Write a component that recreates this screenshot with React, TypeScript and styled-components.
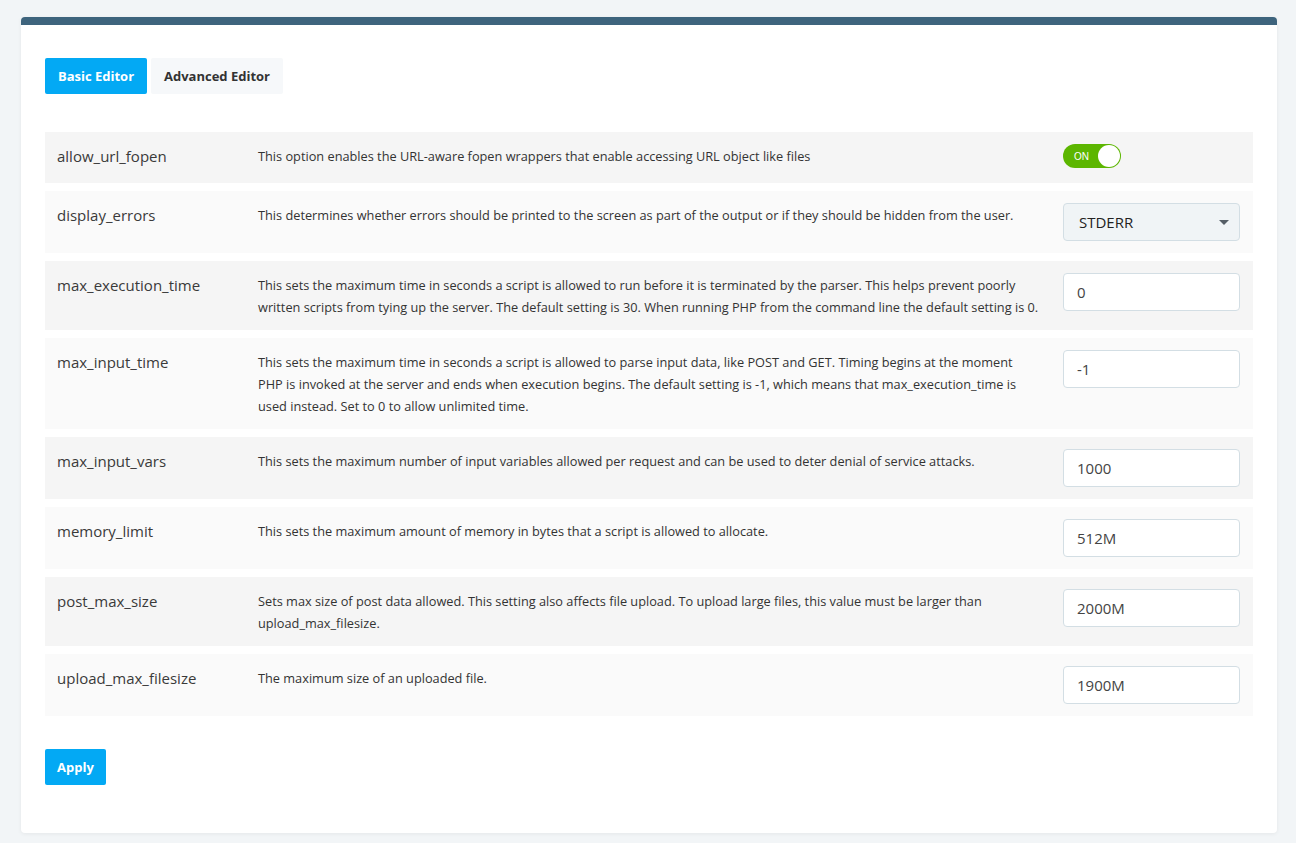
import React from "react";
import styled, { createGlobalStyle } from "styled-components";

const Global = createGlobalStyle`
  html, body { margin: 0; padding: 0; background: #f2f5f7; }
  body { font-family: "Open Sans", "Noto Sans", sans-serif; color: #333; }
  * { box-sizing: border-box; }
`;

const Page = styled.div`
  padding: 17px 19px 10px 21px;
`;

const Card = styled.div`
  background: #fff;
  border-radius: 4px;
  border-top: 8px solid #3e647d;
  box-shadow: 0 1px 4px rgba(0, 0, 0, 0.06);
  padding: 33px 24px 48px 24px;
`;

const Tabs = styled.div`
  display: flex;
  gap: 4px;
  margin-bottom: 38px;
`;

const Tab = styled.button<{ $active?: boolean }>`
  height: 36px;
  padding: 0;
  border: none;
  border-radius: 2px;
  font-family: "Open Sans", sans-serif;
  font-weight: 700;
  font-size: 13px;
  cursor: pointer;
  background: ${(p) => (p.$active ? "#03a9f4" : "#f6f8fa")};
  color: ${(p) => (p.$active ? "#fff" : "#333")};
  width: ${(p) => (p.$active ? "102px" : "132px")};
`;

const List = styled.div`
  display: flex;
  flex-direction: column;
  gap: 8px;
`;

const Row = styled.div<{ $odd: boolean }>`
  display: grid;
  grid-template-columns: 201px 1fr 177px;
  padding: 12px 13px 12px 12px;
  background: ${(p) => (p.$odd ? "#f5f5f5" : "#fafafa")};
  align-items: start;
`;

const Name = styled.div`
  font-size: 15px;
  line-height: 22px;
  color: #3a3a3a;
  padding-top: 1px;
`;

const Desc = styled.div`
  font-size: 12.75px;
  line-height: 22px;
  color: #333;
  padding-top: 1px;
  padding-right: 23px;
`;

const Input = styled.input`
  width: 177px;
  height: 38px;
  border: 1px solid #d3dee4;
  border-radius: 4px;
  background: #fff;
  padding: 0 13px;
  font-family: "Open Sans", sans-serif;
  font-size: 15px;
  color: #444;
  outline: none;
`;

const SelectBox = styled.div`
  width: 177px;
  height: 38px;
  border: 1px solid #d3dee4;
  border-radius: 4px;
  background: #f0f4f6;
  padding: 0 10px 0 15px;
  display: flex;
  align-items: center;
  justify-content: space-between;
  font-size: 15px;
  color: #222;
`;

const Caret = styled.span`
  width: 0;
  height: 0;
  border-left: 5px solid transparent;
  border-right: 5px solid transparent;
  border-top: 5px solid #555e66;
`;

const ToggleWrap = styled.div`
  height: 27px;
`;

const Toggle = styled.div`
  position: relative;
  width: 58px;
  height: 24px;
  border-radius: 12px;
  background: #5cb600;
  display: flex;
  align-items: center;
  padding-left: 11px;
  font-family: "Liberation Sans", Arial, sans-serif;
  font-size: 10px;
  color: #fff;
`;

const Knob = styled.span`
  position: absolute;
  right: 1px;
  top: 1px;
  width: 22px;
  height: 22px;
  border-radius: 50%;
  background: #fff;
`;

const ApplyButton = styled.button`
  margin-top: 33px;
  height: 36px;
  width: 61px;
  border: none;
  border-radius: 2px;
  background: #03a9f4;
  color: #fff;
  font-family: "Open Sans", sans-serif;
  font-weight: 700;
  font-size: 13px;
  cursor: pointer;
`;

type Setting = {
  name: string;
  desc: string;
  kind: "toggle" | "select" | "input";
  value?: string;
};

const settings: Setting[] = [
  {
    name: "allow_url_fopen",
    desc: "This option enables the URL-aware fopen wrappers that enable accessing URL object like files",
    kind: "toggle",
  },
  {
    name: "display_errors",
    desc: "This determines whether errors should be printed to the screen as part of the output or if they should be hidden from the user.",
    kind: "select",
    value: "STDERR",
  },
  {
    name: "max_execution_time",
    desc: "This sets the maximum time in seconds a script is allowed to run before it is terminated by the parser. This helps prevent poorly written scripts from tying up the server. The default setting is 30. When running PHP from the command line the default setting is 0.",
    kind: "input",
    value: "0",
  },
  {
    name: "max_input_time",
    desc: "This sets the maximum time in seconds a script is allowed to parse input data, like POST and GET. Timing begins at the moment PHP is invoked at the server and ends when execution begins. The default setting is -1, which means that max_execution_time is used instead. Set to 0 to allow unlimited time.",
    kind: "input",
    value: "-1",
  },
  {
    name: "max_input_vars",
    desc: "This sets the maximum number of input variables allowed per request and can be used to deter denial of service attacks.",
    kind: "input",
    value: "1000",
  },
  {
    name: "memory_limit",
    desc: "This sets the maximum amount of memory in bytes that a script is allowed to allocate.",
    kind: "input",
    value: "512M",
  },
  {
    name: "post_max_size",
    desc: "Sets max size of post data allowed. This setting also affects file upload. To upload large files, this value must be larger than upload_max_filesize.",
    kind: "input",
    value: "2000M",
  },
  {
    name: "upload_max_filesize",
    desc: "The maximum size of an uploaded file.",
    kind: "input",
    value: "1900M",
  },
];

function Control({ s }: { s: Setting }) {
  if (s.kind === "toggle")
    return (
      <ToggleWrap>
        <Toggle>
          ON
          <Knob />
        </Toggle>
      </ToggleWrap>
    );
  if (s.kind === "select")
    return (
      <SelectBox>
        <span>{s.value}</span>
        <Caret />
      </SelectBox>
    );
  return <Input defaultValue={s.value} />;
}

export default function App() {
  return (
    <>
      <Global />
      <Page>
        <Card>
          <Tabs>
            <Tab $active>Basic Editor</Tab>
            <Tab>Advanced Editor</Tab>
          </Tabs>
          <List>
            {settings.map((s, i) => (
              <Row key={s.name} $odd={i % 2 === 0}>
                <Name>{s.name}</Name>
                <Desc>{s.desc}</Desc>
                <Control s={s} />
              </Row>
            ))}
          </List>
          <ApplyButton>Apply</ApplyButton>
        </Card>
      </Page>
    </>
  );
}
